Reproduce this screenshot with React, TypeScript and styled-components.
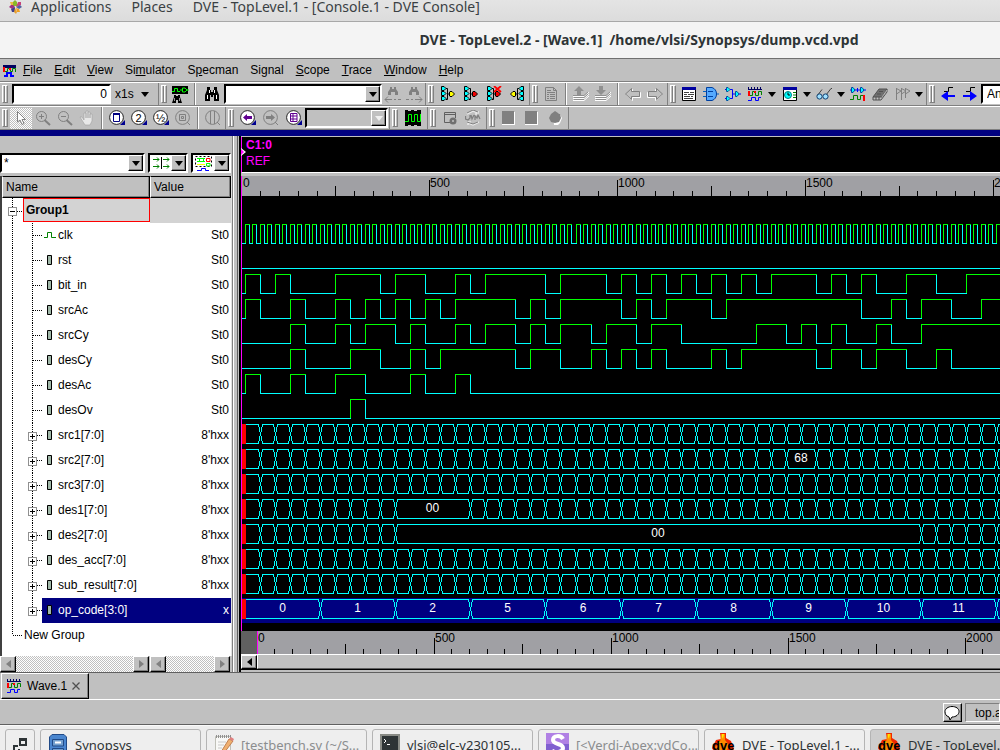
import React from "react";
import styled, { createGlobalStyle, css } from "styled-components";

const GREEN = "#00ff00";
const CYAN = "#00ffff";
const FACE = "#c0c0c0";
const NAVY = "#000080";
const UI = `"Liberation Sans", Arial, sans-serif`;
const SHELL = `"Noto Sans", "Open Sans", sans-serif`;

const Global = createGlobalStyle`
  * { box-sizing: border-box; }
  html, body { margin: 0; overflow: hidden; }
  body { background: ${FACE}; font: 12px/16px ${UI}; color: #000; }
  button, input, select { font: inherit; color: inherit; margin: 0; padding: 0; border-radius: 0; }
  svg { display: block; flex: none; }
`;

const raised = css`
  border: 1px solid;
  border-color: #fff #000 #000 #fff;
  box-shadow: inset -1px -1px 0 #808080;
`;
const sunken = css`
  border: 2px solid;
  border-color: #000 #fff #fff #000;
`;

const Screen = styled.div`
  display: flex;
  flex-direction: column;
  width: 100%;
`;

/* ---------- desktop shell ---------- */
const TopPanel = styled.header`
  display: flex;
  gap: 20px;
  height: 22px;
  padding: 0 8px;
  background: linear-gradient(#e4e4e4, #dcdcdc);
  border-bottom: 1px solid #a8a8a8;
  font: 14px/14px ${SHELL};
  color: #3a4043;
  white-space: nowrap;
`;
const PanelLink = styled.button`
  display: flex;
  gap: 8px;
  height: 14px;
  border: 0;
  background: none;
`;
const TitleBar = styled.h1`
  height: 36px;
  margin: 0;
  padding-left: 278px;
  background: #f4f4f4;
  font: bold 14px/36px ${SHELL};
  color: #2e3436;
  text-align: center;
  white-space: pre;
`;
const TaskBar = styled.footer`
  display: flex;
  gap: 5px;
  height: 36px;
  padding: 3px 5px;
  background: #ededed;
  border-top: 1px solid #fafafa;
`;
const Task = styled.button<{ $active?: boolean; $dim?: boolean; $icon?: boolean }>`
  display: flex;
  align-items: center;
  gap: 7px;
  flex: none;
  width: ${(p) => (p.$icon ? 30 : 161)}px;
  height: 31px;
  padding: 0 ${(p) => (p.$icon ? 4 : 7)}px;
  border: 1px solid #b4b4b4;
  border-radius: 3px;
  background: ${(p) => (p.$active ? "#cdcdcd" : "#eeeeee")};
  font: 13px/18px ${SHELL};
  color: ${(p) => (p.$dim ? "#8b8d8e" : "#2e3436")};
  white-space: nowrap;
  overflow: hidden;
`;

/* ---------- menus and toolbars ---------- */
const MenuBar = styled.nav`
  display: flex;
  align-items: center;
  gap: 2px;
  height: 24px;
  padding-left: 3px;
  border-top: 1px solid #707070;
  border-bottom: 1px solid #808080;
`;
const MenuItem = styled.button`
  height: 20px;
  padding: 0 5px;
  border: 0;
  background: none;
`;
const Tools = styled.div`
  display: flex;
  height: 24px;
  overflow: hidden;
  border-top: 1px solid #fff;
  border-bottom: 1px solid #808080;
`;
const Group = styled.div<{ $open?: boolean }>`
  display: flex;
  align-items: center;
  flex: none;
  padding: 0 1px 0 2px;
  border-right: ${(p) => (p.$open ? 0 : 1)}px solid #808080;
`;
const Grip = styled.span`
  width: 6px;
  height: 18px;
  margin-right: 2px;
  border: 1px solid;
  border-color: #fff #808080 #808080 #fff;
  background: linear-gradient(90deg, ${FACE} 0 1px, #808080 1px 2px, #fff 2px 3px, ${FACE} 3px);
`;
const Tool = styled.button<{ $w?: number; $on?: boolean }>`
  display: flex;
  align-items: center;
  justify-content: center;
  flex: none;
  width: ${(p) => p.$w || 22}px;
  height: 21px;
  border: 0;
  background: ${(p) =>
    p.$on ? "repeating-conic-gradient(#fff 0 25%, #c0c0c0 0 50%) 0 0 / 2px 2px" : "none"};
`;
const Sep = styled.span`
  width: 2px;
  height: 22px;
  margin: 0 3px;
  border-left: 1px solid #808080;
  border-right: 1px solid #fff;
`;
const TimeInput = styled.input`
  width: 99px;
  height: 20px;
  margin-left: 2px;
  padding-right: 2px;
  text-align: right;
  background: #fff;
  ${sunken}
`;
const UnitButton = styled.button`
  display: flex;
  align-items: center;
  gap: 7px;
  width: 46px;
  padding: 0 4px;
  border: 0;
  background: none;
`;
const Combo = styled.div<{ $w: number; $off?: boolean }>`
  display: flex;
  flex: none;
  width: ${(p) => p.$w}px;
  height: 20px;
  background: ${(p) => (p.$off ? FACE : "#fff")};
  ${sunken}
`;
const ComboInput = styled.input`
  flex: 1;
  min-width: 0;
  padding-left: 2px;
  border: 0;
  background: transparent;
`;
const ComboIcon = styled.span`
  display: flex;
  flex: 1;
  align-items: center;
  justify-content: center;
`;
const ComboButton = styled.button`
  display: flex;
  align-items: center;
  justify-content: center;
  width: 15px;
  height: 16px;
  background: ${FACE};
  ${raised}
`;
const EdgeSelect = styled.select`
  appearance: none;
  width: 120px;
  height: 20px;
  padding-left: 4px;
  background: #fff;
  ${sunken}
`;
const NavyRule = styled.div`
  height: 6px;
  background: ${NAVY};
`;

/* ---------- workspace ---------- */
const Workspace = styled.main`
  display: flex;
  height: 536px;
`;
const SignalPane = styled.section`
  display: flex;
  flex-direction: column;
  flex: none;
  width: 232px;
  padding-top: 17px;
`;
const Filters = styled.div`
  display: flex;
  gap: 3px;
  height: 23px;
`;
const Tree = styled.div`
  flex: 1;
  background: #fff;
  border-left: 2px solid #404040;
  border-right: 1px solid #e0e0e0;
`;
const SignalTable = styled.table`
  width: 100%;
  border-collapse: separate;
  border-spacing: 0;
  table-layout: fixed;
`;
const Head = styled.th<{ $w?: number }>`
  width: ${(p) => (p.$w ? `${p.$w}px` : "auto")};
  height: 22px;
  padding: 0 3px;
  text-align: left;
  font-weight: normal;
  background: ${FACE};
  ${raised}
  border-top-color: #000;
`;
const Cell = styled.td<{ $tint?: string }>`
  height: 25px;
  padding: 0;
  background: ${(p) => p.$tint || "transparent"};
`;
const NameLine = styled.div`
  display: flex;
  height: 25px;
`;
const GroupName = styled.div`
  flex: 1;
  height: 24px;
  padding-left: 2px;
  border: 1px solid #f00;
  background: #d3d3d3;
  font-weight: bold;
  line-height: 22px;
`;
const SignalName = styled.div<{ $sel?: boolean }>`
  display: flex;
  flex: 1;
  gap: 2px;
  line-height: 24px;
  background: ${(p) => (p.$sel ? NAVY : "transparent")};
  color: ${(p) => (p.$sel ? "#fff" : "#000")};
`;
const PlainName = styled.div`
  padding-left: 1px;
  line-height: 24px;
`;
const ValueText = styled.div<{ $sel?: boolean }>`
  height: 25px;
  padding-right: 2px;
  line-height: 24px;
  text-align: right;
  background: ${(p) => (p.$sel ? NAVY : "transparent")};
  color: ${(p) => (p.$sel ? "#fff" : "#000")};
`;
const Scrolls = styled.div`
  display: flex;
  gap: 1px;
  height: 16px;
  padding-right: 2px;
`;
const ScrollBar = styled.div<{ $w?: number }>`
  display: flex;
  width: ${(p) => (p.$w ? `${p.$w}px` : "auto")};
  flex: ${(p) => (p.$w ? "none" : 1)};
`;
const ScrollButton = styled.button`
  display: flex;
  align-items: center;
  justify-content: center;
  flex: none;
  width: 16px;
  background: ${FACE};
  ${raised}
`;
const DitherTrack = styled.div`
  flex: 1;
  background: repeating-conic-gradient(#fff 0 25%, #c0c0c0 0 50%) 0 0 / 2px 2px;
`;
const Splitter = styled.div`
  flex: none;
  width: 9px;
  background: linear-gradient(90deg, #808080 0 1px, #fff 1px 2px, ${FACE} 2px 5px, #606060 5px 6px, ${FACE} 6px 7px, #000 7px 9px);
`;
const WavePane = styled.section`
  display: flex;
  flex: 1;
  flex-direction: column;
  min-width: 0;
  overflow: hidden;
  padding-top: 1px;
`;
const CursorStrip = styled.div`
  display: flex;
  flex-direction: column;
  height: 36px;
  padding-left: 4px;
  border-left: 1px solid #f0f;
  border-bottom: 1px solid #fff;
  background: #000;
  color: #f0f;
  position: relative;
`;
const CursorKnob = styled.svg`
  position: absolute;
  left: -1px;
  top: 11px;
`;
const CursorName = styled.strong`
  line-height: 16px;
`;
const Ruler = styled.div<{ $bottom?: boolean }>`
  display: flex;
  height: ${(p) => (p.$bottom ? 23 : 20)}px;
  margin-top: ${(p) => (p.$bottom ? 0 : 3)}px;
  border-left: ${(p) => (p.$bottom ? "16px solid #606060" : "1px solid #f0f")};
  background: #a0a0a4;
`;
const RulerEdge = styled.span`
  width: 1px;
  margin-right: -1px;
  background: #f0f;
`;
const Plot = styled.div`
  display: flex;
  flex-direction: column;
  padding: 27px 0 8px;
  border-left: 1px solid #f0f;
  background: #000;
`;
const WaveRow = styled.svg<{ $sel?: boolean }>`
  width: 100%;
  height: 25px;
  background: ${(p) => (p.$sel ? NAVY : "transparent")};
  font: 12px ${UI};
`;
const RulerSvg = styled.svg`
  flex: 1;
  min-width: 0;
  height: 100%;
  font: 12px ${UI};
`;
const WaveScroll = styled.div`
  display: flex;
  height: 16px;
  border-top: 1px solid #fff;
  border-bottom: 1px solid #000;
`;
const Thumb = styled.div`
  flex: 1;
  background: ${FACE};
  border-left: 1px solid #fff;
  border-bottom: 1px solid #606060;
`;

/* ---------- tabs and status ---------- */
const TabStrip = styled.div`
  display: flex;
  height: 28px;
  border-top: 1px solid #606060;
  border-bottom: 1px solid #fff;
`;
const Tab = styled.div`
  display: flex;
  align-items: center;
  gap: 5px;
  width: 88px;
  height: 26px;
  margin-left: 1px;
  padding-left: 4px;
  ${raised}
`;
const TabClose = styled.button`
  display: flex;
  border: 0;
  background: none;
`;
const StatusBar = styled.div`
  display: flex;
  justify-content: flex-end;
  gap: 3px;
  height: 25px;
  padding-top: 3px;
  border-bottom: 1px solid #606060;
`;
const Bubble = styled.button`
  width: 19px;
  height: 19px;
  background: ${FACE};
  ${raised}
`;
const Scope = styled.output`
  width: 35px;
  height: 19px;
  padding-left: 9px;
  border: 1px solid;
  border-color: #808080 #fff #fff #808080;
  line-height: 18px;
  overflow: hidden;
  white-space: nowrap;
`;

/* ---------- icons ---------- */
const Ic = ({ children, w = 16, h = 16 }: { children: React.ReactNode; w?: number; h?: number }) => (
  <svg width={w} height={h} viewBox={`0 0 ${w} ${h}`} fill="none" aria-hidden="true">
    {children}
  </svg>
);
const Caret = ({ c = "#000" }: { c?: string }) => (
  <Ic w={8} h={5}>
    <path d="M0 0H8L4 5Z" fill={c} />
  </Ic>
);
const Arrow = ({ flip, c = "#808080" }: { flip?: boolean; c?: string }) => (
  <Ic w={5} h={8}>
    <path d={flip ? "M0 0V8L5 4Z" : "M5 0V8L0 4Z"} fill={c} />
  </Ic>
);
const WaveIcon = () => (
  <Ic>
    <path d="M1.5 1V3M4.500 1V3M7.500 1V3M10.500 1V3M13.500 1V3M1 3.500H15" stroke="#000060" />
    <path d="M3 9.500H5.500V5.500H8.500V9.500H11.500V5.500H14.500V9" stroke="#008000" />
    <path d="M1 5H3V10H1ZM7 5H9V7H7Z" fill="#f00" />
    <path d="M1 14.500H4.500V11.500H8.500V14.500H11.500V11.500H14" stroke="#00f" />
  </Ic>
);
const Binoc = () => (
  <Ic>
    <path d="M3 1H6V4H7V6H9V4H10V1H13V4L15 9V15H10V9H9V11H7V9H6V15H1V9L3 4Z" fill="#000" />
    <path d="M3.500 9V13M5.500 4V7M12.500 9V13M10.500 4V7" stroke="#fff" />
  </Ic>
);
const FindWave = () => (
  <Ic w={18} h={17}>
    <path d="M1 0H17V8H1Z" fill="#000" />
    <path d="M1 5.500H3.500V2.500H6.500V5.500H9M9 4H11M11.500 2V6H14L16 4L14 2H11.500M16 4H18" stroke={GREEN} />
    <path d="M3 9H5V10H7V9H9V11L11 17H7V14H5V17H1L3 11Z" fill="#000" />
    <path d="M3.500 12V15M8.500 12V15" stroke="#fff" strokeWidth=".6" />
  </Ic>
);
const FindDir = ({ flip }: { flip?: boolean }) => (
  <Ic w={18} h={17}>
    <path d="M6 1H8V3H10V1H12V3L14 6V9H11V6H7V9H4V6L6 3Z" fill="#808080" />
    <path d={flip ? "M1 13.500H4M6 13.500H8M10 13.500H17M14 10.500L17 13.500L14 16.500" : "M17 13.500H14M12 13.500H10M8 13.500H1M4 10.500L1 13.500L4 16.500"} stroke="#808080" />
  </Ic>
);
const Fan = ({ c, flip, x }: { c: string; flip?: boolean; x?: boolean }) => (
  <Ic>
    <g transform={flip ? "matrix(-1 0 0 1 16 0)" : undefined}>
      <path d="M6 2.500H7.500V13.500H6M7.500 8H10" stroke="#000" />
      <path d="M1.500 .5H4L6 2.500L4 4.500H1.500ZM1.500 5.500H4L6 7.500L4 9.500H1.500ZM1.500 10.500H4L6 12.500L4 14.500H1.500Z" fill={CYAN} stroke="#000" />
      <path d="M10 5.500H12L14.500 8L12 10.500H10L9.500 10V6Z" fill={c} stroke="#000" />
    </g>
    {x && <path d="M8 0L15 6M15 0L8 6" stroke="#f00" strokeWidth="1.800" />}
  </Ic>
);
const DocIcon = () => (
  <Ic>
    <path d="M2.500 1.500H10.500L13.500 4.500V14.500H2.500ZM10.500 1.500V4.500H13.500M4 4.500H8M4 6.500H12M4 8.500H6M7 8.500H12M4 10.500H6M7 10.500H12M4 12.500H6M7 12.500H12" stroke="#808080" />
  </Ic>
);
const Stack = ({ down }: { down?: boolean }) => (
  <Ic w={18}>
    <path d="M1 10.500H12L17 6M1 12.500H12L17 8M1 14.500H12L17 10" stroke="#fff" />
    <path d="M1 9.500H12L16 6M2 11.500H12L16 8M2 13.500H12" stroke="#909090" />
    <path d={down ? "M5 0H9V4H12L7 9L2 4H5Z" : "M7 0L12 5H9V9H5V5H2Z"} fill="#909090" />
  </Ic>
);
const Outline = ({ flip }: { flip?: boolean }) => (
  <Ic>
    <g transform={flip ? "matrix(-1 0 0 1 16 0)" : undefined}>
      <path d="M1.500 9L7.500 3.500V6.500H15.500V11.500H7.500V14.500Z" stroke="#fff" />
      <path d="M.5 8L6.500 2.500V5.500H14.500V10.500H6.500V13.500Z" stroke="#808080" fill={FACE} />
    </g>
  </Ic>
);
const ListIcon = () => (
  <Ic>
    <path d="M1.500 1.500H14.500V14.500H1.500Z" fill="#fff" stroke="#000" />
    <path d="M1 1H15V4H1Z" fill="#0000a0" />
    <path d="M3 6.500H8M9 6.500H13M3 8.500H6M7 8.500H13M3 10.500H9M10 10.500H12M3 12.500H12" stroke="#404040" />
  </Ic>
);
const GateIcon = () => (
  <Ic>
    <path d="M0 5.500H3M0 10.500H3M13 8H16" stroke="#0060c0" />
    <path d="M3.500 1.500H9C12 2.500 13.500 5 13.500 8S12 13.500 9 14.500H3.500Z" fill="#55aaff" stroke="#0040a0" />
    <path d="M5 5.500H10M5 10.500H10" stroke="#0040a0" />
  </Ic>
);
const NetIcon = () => (
  <Ic>
    <path d="M0 3.500H2M0 12.500H2M5 3.500H7.500V12.500H5M7.500 8H10M14 8H16" stroke="#00f" />
    <path d="M1.500 1.500H3L5 3.500L3 5.500H1.500ZM1.500 10.500H3L5 12.500L3 14.500H1.500ZM10.500 5.500H12L14 8L12 10.500H10.500Z" fill={CYAN} stroke="#0050a0" />
  </Ic>
);
const ClockList = () => (
  <Ic>
    <path d="M1.500 1.500H14.500V14.500H1.500Z" fill="#fff" stroke="#000" />
    <path d="M1 1H15V4H1Z" fill="#0000a0" />
    <circle cx="6" cy="9" r="3.500" fill={CYAN} stroke="#008080" />
    <path d="M6 6.500V9H8" stroke="#000" />
    <path d="M11 6.500H14M11 9H14M11 11.500H14" stroke="#008000" />
  </Ic>
);
const Glasses = () => (
  <Ic>
    <path d="M1 10L6 3.500M10 9L15 2.500H16" stroke="#404040" />
    <circle cx="3.500" cy="10.500" r="2.600" fill="#a0e0ff" stroke="#104070" />
    <circle cx="9.500" cy="10.500" r="2.600" fill="#a0e0ff" stroke="#104070" />
  </Ic>
);
const NetWave = () => (
  <Ic>
    <path d="M0 4H16" stroke="#00f" />
    <path d="M1.500 1.500H3L5 4L3 6.500H1.500ZM10.500 1.500H12L14 4L12 6.500H10.500Z" fill={CYAN} stroke="#0040a0" />
    <path d="M7.500 2V6" stroke="#00f" />
    <path d="M0 13.500H3.500V9.500H7.500V13.500H10.500V9.500H13" stroke="#008000" />
    <path d="M13 9H15V15H13Z" fill="#f00" />
  </Ic>
);
const Memory = () => (
  <Ic>
    <path d="M1 11L7 3H15L10 11Z" fill="#707070" stroke="#505050" />
    <path d="M1 11V14H9L15 6V3M4 11V14M7 11V14M5 8L9 8M7 5.500H11" stroke="#505050" />
    <path d="M10 11L15 4" stroke="#b0b0b0" />
  </Ic>
);
const Flags = () => (
  <Ic>
    <path d="M2.500 2V14M2.500 2.500L7 5L2.500 8M7.500 2V14M7.500 2.500L12 5L7.500 8M11.500 2V12M11.500 2.500L16 5L11.500 8" stroke="#808080" />
  </Ic>
);
const EdgeArrow = ({ flip }: { flip?: boolean }) => (
  <Ic>
    <path d="M4 5.500H8.500V1.500H13" stroke="#000" />
    <path d={flip ? "M1 9H8V5L15 10L8 15V11H1Z" : "M15 9H8V5L1 10L8 15V11H15Z"} fill="#00f" />
  </Ic>
);
const Pointer = () => (
  <Ic>
    <path d="M4.500 1.500V12L7 10L9 14.500L11 13.500L9 9.500H12.500Z" fill="#fff" stroke="#808080" />
  </Ic>
);
const Lens = ({ plus }: { plus?: boolean }) => (
  <Ic>
    <path d="M9.500 10L15 15" stroke="#808080" strokeWidth="2" />
    <circle cx="6.500" cy="6.500" r="5" stroke="#808080" />
    <path d={plus ? "M4 6.500H9M6.500 4V9" : "M4 6.500H9"} stroke="#808080" />
  </Ic>
);
const Hand = () => (
  <Ic>
    <path d="M1 7H3L5 10V3H7V8V1H9V8V2H11V8V4H13V11L11 15H6Z" fill="#e8e8e8" stroke="#a0a0a0" strokeWidth=".6" />
  </Ic>
);
const Round = ({ off, children }: { off?: boolean; children?: React.ReactNode }) => (
  <Ic>
    {!off && <path d="M11 15H16V10Z" fill="#000090" />}
    <circle cx="7.500" cy="7.500" r="6.900" fill={off ? FACE : "#fff"} stroke={off ? "#808080" : "#202020"} />
    {off && <path d="M12 12L15 15" stroke="#808080" />}
    {children}
  </Ic>
);
const Digit = ({ children }: { children: string }) => (
  <text x="7.500" y="11.500" fontSize="11" fontFamily="Liberation Sans, sans-serif" textAnchor="middle" fill="#000">
    {children}
  </text>
);
const FilterArrows = () => (
  <Ic w={18} h={14}>
    <path d="M9.500 1V13" stroke="#000" />
    <path d="M1 3.500H7M1 10.500H7M5 1.500L7 3.500L5 5.500M5 8.500L7 10.500L5 12.500M11 3.500H17M11 10.500H17M15 1.500L17 3.500L15 5.500M15 8.500L17 10.500L15 12.500" stroke="#008000" />
  </Ic>
);
const FilterWave = () => (
  <Ic w={17} h={16}>
    <path d="M.5 1.500H16.500V11.500H.5Z" stroke="#000" strokeDasharray="2 2" />
    <path d="M2 3.500H10M2 6.500H10M4.500 3V7M8.500 3V7" stroke={GREEN} />
    <path d="M11.500 3.500H15V6.500H11.500Z" stroke="#f00" />
    <path d="M2 9.500H10" stroke="#ff0" />
    <path d="M11.500 8.500H15V11H11.500Z" stroke={GREEN} />
    <path d="M2 15.500H6.500V13.500H10.500V15.500H14" stroke="#00f" />
  </Ic>
);
const ClkIcon = () => (
  <Ic w={14} h={25}>
    <path d="M2 14.500H5.500V9.500H9.500V14.500H14" stroke="#008000" />
  </Ic>
);
const RegIcon = () => (
  <Ic w={14} h={25}>
    <path d="M5.500 7.500H9.500V16.500H5.500Z" fill="#a0b8a8" stroke="#000" />
  </Ic>
);
const AppLogo = () => (
  <Ic w={15} h={14}>
    <path d="M7 0L9 2V6H5V2Z" fill="#8ab828" />
    <path d="M10 2H13V5L8 7Z" fill="#c7417b" />
    <path d="M1 7L4 4L7 7L4 9Z" fill="#a03080" />
    <path d="M8 7L12 5L14 7L11 9Z" fill="#5060a0" />
    <path d="M3 9L7 7V12L4 12Z" fill="#40408c" />
    <path d="M8 8L11 9L12 12H9Z" fill="#f0a020" />
    <path d="M6 12L7 8L9 12L8 14Z" fill="#e8a030" />
    <path d="M2 2L5 2V5L3 5Z" fill="#e8b840" />
  </Ic>
);
const DveLogo = () => (
  <Ic w={23} h={26}>
    <path d="M8 1H14V6L19 9L22 17L18 25H5L0 16L4 8L9 7Z" fill="#f02800" />
    <path d="M9 2H13V8L17 13L14 22L6 21L3 15L8 11Z" fill="#ff8a00" />
    <path d="M10 2H12L11 7L10 5ZM6 9L9 10L6 12Z" fill="#ffe600" />
    <text x="0" y="18" fontSize="13" fontWeight="bold" fontFamily="Liberation Sans, sans-serif" fill="#000">
      dve
    </text>
  </Ic>
);

/* ---------- signal data ---------- */
type Sig = { name: string; value: string; edges?: number[]; hold?: [number, number, string] };
const SIGNALS: Sig[] = [
  { name: "clk", value: "St0" },
  { name: "rst", value: "St0", edges: [] },
  { name: "bit_in", value: "St0", edges: [0, 1, 2, 3, 6, 9, 10, 12, 14, 15, 16, 20, 21, 24, 25, 26, 27, 28, 29, 30, 31, 32, 33, 34, 35, 38, 39, 40, 41, 42, 44, 46, 48] },
  { name: "srcAc", value: "St0", edges: [0, 1, 3, 4, 6, 7, 8, 9, 10, 11, 12, 13, 14, 18, 19, 20, 21, 25, 26, 27, 28, 31, 32, 41, 43, 44, 45, 47, 49] },
  { name: "srcCy", value: "St0", edges: [3, 4, 6, 7, 8, 10, 11, 12, 14, 15, 16, 18, 19, 20, 21, 23, 24, 26, 27, 29, 34, 36, 37, 38, 39, 40, 42, 43, 45] },
  { name: "desCy", value: "St0", edges: [3, 4, 7, 9, 11, 12, 13, 18, 19, 21, 23, 24, 25, 26, 27, 28, 31, 32, 33, 38, 39, 41, 42, 44, 46, 47] },
  { name: "desAc", value: "St0", edges: [0, 1, 3, 4, 6, 8, 11, 12, 14, 15] },
  { name: "desOv", value: "St0", edges: [7, 8] },
  { name: "src1[7:0]", value: "8'hxx" },
  { name: "src2[7:0]", value: "8'hxx", hold: [36, 38, "68"] },
  { name: "src3[7:0]", value: "8'hxx" },
  { name: "des1[7:0]", value: "8'hxx", hold: [10, 15, "00"] },
  { name: "des2[7:0]", value: "8'hxx", hold: [10, 45, "00"] },
  { name: "des_acc[7:0]", value: "8'hxx" },
  { name: "sub_result[7:0]", value: "8'hxx" },
  { name: "op_code[3:0]", value: "x" },
];
const OPCODES = ["0", "1", "2", "5", "6", "7", "8", "9", "10", "11"];
const CYCLES = 130;
const WIDE = 4000;
const HI = 1.5;
const LO = 20.5;
const at = (k: number) => Math.round(3 + 15.023 * k);

function Digital({ edges }: { edges: number[] }) {
  let high = "";
  let low = `M0 ${LO}`;
  edges.forEach((x, i) => {
    const px = x + 0.5;
    const next = (i + 1 < edges.length ? edges[i + 1] : WIDE) + 0.5;
    if (i % 2 === 0) {
      low += `H${px}`;
      high += `M${px} ${LO}V${HI}H${next}`;
    } else {
      low += `M${px} ${HI}V${LO}`;
    }
  });
  if (edges.length % 2 === 0) low += `H${WIDE}`;
  return (
    <g fill="none" shapeRendering="crispEdges">
      <path d={high} stroke={GREEN} />
      <path d={low} stroke={CYAN} />
    </g>
  );
}

function Bus({ cuts, labels }: { cuts: number[]; labels: Record<number, string> }) {
  let d = "";
  for (let i = 0; i + 1 < cuts.length; i++) {
    const a = cuts[i] + 0.5;
    const b = cuts[i + 1] + 0.5;
    const start = i === 0 ? `M${a} ${HI}` : `M${a} 11L${a + 2} ${HI}`;
    const end = i === 0 ? `H${a}` : `H${a + 2}L${a} 11`;
    d += `${start}H${b - 2}L${b} 11L${b - 2} ${LO}${end}`;
  }
  return (
    <>
      <path d={d} fill="none" stroke={CYAN} shapeRendering="crispEdges" />
      <rect x="0" y="1" width="4" height="20" fill="#f00" />
      {Object.keys(labels).map((k) => {
        const i = Number(k);
        return (
          <text key={k} x={(cuts[i] + cuts[i + 1]) / 2} y="14" fill="#fff" textAnchor="middle">
            {labels[i]}
          </text>
        );
      })}
    </>
  );
}

function Wave({ sig }: { sig: Sig }) {
  if (sig.name === "clk") {
    const edges: number[] = [];
    for (let k = 0; k < CYCLES; k++) edges.push(at(k), at(k) + 4, at(k) + 7, at(k) + 11);
    return <Digital edges={edges} />;
  }
  if (sig.edges) return <Digital edges={sig.edges.map(at)} />;
  const cuts: number[] = [];
  const labels: Record<number, string> = {};
  if (sig.name.startsWith("op_code")) {
    for (let k = 0; k < CYCLES; k += 5) {
      if (OPCODES[k / 5]) labels[k / 5] = OPCODES[k / 5];
      cuts.push(at(k));
    }
  } else {
    for (let k = 0; k < CYCLES; k++) {
      if (sig.hold && k > sig.hold[0] && k < sig.hold[1]) continue;
      if (sig.hold && k === sig.hold[0]) labels[cuts.length] = sig.hold[2];
      cuts.push(at(k));
    }
  }
  return <Bus cuts={cuts} labels={labels} />;
}

const MARKS = Array.from({ length: 90 }, (_, i) => i * 50);
const LABELS = [0, 500, 1000, 1500, 2000];

function Ticks({ scale, height }: { scale: number; height: number }) {
  const d = MARKS.filter((t) => t > 0)
    .map((t) => {
      const len = t % 500 === 0 ? 16 : t % 250 === 0 ? 10 : 5;
      return `M${Math.floor(t * scale) + 0.5} ${height}V${height - len}`;
    })
    .join("");
  return (
    <RulerSvg>
      <path d={d} stroke="#000" shapeRendering="crispEdges" />
      {LABELS.map((t) => (
        <text key={t} x={Math.floor(t * scale) + 1} y="11">
          {t}
        </text>
      ))}
    </RulerSvg>
  );
}

type GuideKind = "group" | "leaf" | "bus" | "last" | "end";
const Guide = ({ kind }: { kind: GuideKind }) => {
  const w = kind === "group" || kind === "end" ? 21 : 40;
  return (
    <Ic w={w} h={25}>
      <g stroke="#000" strokeDasharray="1 1" shapeRendering="crispEdges">
        <path d={kind === "end" ? "M10.5 0V12" : "M10.5 0V25"} />
        {kind === "group" && <path d="M15 13.500H21" />}
        {kind === "end" && <path d="M11 12.500H20" />}
        {w === 40 && <path d={kind === "last" ? "M30.5 0V12" : "M30.5 0V25"} />}
        {w === 40 && <path d="M31 12.500H40" />}
      </g>
      {(kind === "group" || kind === "bus" || kind === "last") && (
        <g transform={kind === "group" ? "translate(6 9)" : "translate(26 9)"} shapeRendering="crispEdges">
          <path d="M.5 .5H8.500V8.500H.5Z" fill="#fff" stroke="#909090" />
          <path d={kind === "group" ? "M2 4.500H7" : "M2 4.500H7M4.500 2V7"} stroke="#000" />
        </g>
      )}
    </Ic>
  );
};

const MENUS: [string, string, string][] = [
  ["", "F", "ile"], ["", "E", "dit"], ["", "V", "iew"], ["Si", "m", "ulator"], ["S", "p", "ecman"],
  ["Si", "g", "nal"], ["", "S", "cope"], ["", "T", "race"], ["", "W", "indow"], ["", "H", "elp"],
];

export default function App() {
  return (
    <Screen>
      <Global />
      <TopPanel>
        <PanelLink><AppLogo />Applications</PanelLink>
        <PanelLink>Places</PanelLink>
        <PanelLink>DVE - TopLevel.1 - [Console.1 - DVE Console]</PanelLink>
      </TopPanel>
      <TitleBar>DVE - TopLevel.2 - [Wave.1]  /home/vlsi/Synopsys/dump.vcd.vpd</TitleBar>
      <MenuBar>
        <svg width="13" height="13" viewBox="0 0 13 13" fill="none" aria-hidden="true">
          <path d="M0 1H13V4H0Z" fill="#000060" />
          <path d="M2 7.500H4.500V4.500H7.500V7.500H9.500V4.500H12.500V8" stroke="#008000" />
          <path d="M0 3H2V8H0ZM6 4H8V6H6Z" fill="#f00" />
          <path d="M1 12H4V9H8V12H11" stroke="#00f" strokeWidth="2" />
        </svg>
        {MENUS.map(([a, u, b]) => (
          <MenuItem key={a + u + b}>{a}<u>{u}</u>{b}</MenuItem>
        ))}
      </MenuBar>

      <Tools>
        <Group>
          <Grip />
          <TimeInput aria-label="Time" defaultValue="0" />
          <UnitButton>x1s <Caret /></UnitButton>
        </Group>
        <Group>
          <Grip />
          <Tool aria-label="Find signal"><FindWave /></Tool>
          <Sep />
          <Tool aria-label="Find" $w={25}><Binoc /></Tool>
          <Combo $w={158}>
            <ComboInput aria-label="Search text" />
            <ComboButton aria-label="Search history"><Caret /></ComboButton>
          </Combo>
          <Tool aria-label="Find previous"><FindDir /></Tool>
          <Tool $w={20} aria-label="Find next"><FindDir flip /></Tool>
        </Group>
        <Group>
          <Grip />
          <Tool $w={23} aria-label="Trace drivers"><Fan c="#ffff00" /></Tool>
          <Tool $w={23} aria-label="Trace active driver"><Fan c="#f00000" /></Tool>
          <Tool $w={23} aria-label="Clear drivers"><Fan c="#f00000" x /></Tool>
          <Tool $w={23} aria-label="Trace loads"><Fan c="#ffff00" flip /></Tool>
        </Group>
        <Group>
          <Grip />
          <Tool aria-label="Source"><DocIcon /></Tool>
          <Sep />
          <Tool aria-label="Scope up"><Stack /></Tool>
          <Tool aria-label="Scope down"><Stack down /></Tool>
          <Sep />
          <Tool aria-label="Back"><Outline /></Tool>
          <Tool aria-label="Forward"><Outline flip /></Tool>
        </Group>
        <Group>
          <Grip />
          <Tool aria-label="List"><ListIcon /></Tool>
          <Tool aria-label="Schematic"><GateIcon /></Tool>
          <Tool aria-label="Path"><NetIcon /></Tool>
          <Tool aria-label="Wave"><WaveIcon /></Tool>
          <Tool $w={12} aria-label="Wave menu"><Caret /></Tool>
          <Tool $w={23} aria-label="Transactions"><ClockList /></Tool>
          <Tool $w={12} aria-label="Transactions menu"><Caret /></Tool>
          <Tool aria-label="Watch"><Glasses /></Tool>
          <Tool $w={12} aria-label="Watch menu"><Caret /></Tool>
          <Tool aria-label="Compare"><NetWave /></Tool>
          <Tool aria-label="Memory"><Memory /></Tool>
          <Tool aria-label="Assertions"><Flags /></Tool>
          <Tool $w={12} aria-label="Assertions menu"><Caret /></Tool>
        </Group>
        <Group $open>
          <Grip />
          <Tool aria-label="Previous edge"><EdgeArrow /></Tool>
          <Tool aria-label="Next edge"><EdgeArrow flip /></Tool>
          <EdgeSelect aria-label="Edge kind" defaultValue="Any Edge"><option>Any Edge</option></EdgeSelect>
        </Group>
      </Tools>

      <Tools>
        <Group>
          <Grip />
          <Tool $on aria-label="Select"><Pointer /></Tool>
          <Tool aria-label="Zoom in"><Lens plus /></Tool>
          <Tool aria-label="Zoom out"><Lens /></Tool>
          <Tool aria-label="Pan"><Hand /></Tool>
          <Sep />
          <Tool aria-label="Zoom full"><Round><path d="M4.500 4.500H10.500V11.500H4.500Z" stroke="#000080" /><path d="M4 3H11V5H4Z" fill="#000080" /></Round></Tool>
          <Tool aria-label="Zoom 2x"><Round><Digit>2</Digit></Round></Tool>
          <Tool aria-label="Zoom half"><Round><Digit>½</Digit></Round></Tool>
          <Tool aria-label="Zoom selection"><Round off><path d="M4.500 4.500H10.500V10.500H4.500ZM6.500 6.500H8.500V8.500H6.500Z" stroke="#808080" /></Round></Tool>
          <Sep />
          <Tool aria-label="Zoom cursors"><Round off><path d="M5.500 1V14M9.500 1V14" stroke="#808080" /></Round></Tool>
        </Group>
        <Group>
          <Grip />
          <Tool $w={23} aria-label="Undo zoom"><Round><path d="M3 7.500L7 4V6H12V9H7V11Z" fill="#600090" /></Round></Tool>
          <Tool $w={23} aria-label="Redo zoom"><Round off><path d="M12 7.500L8 4V6H3V9H8V11Z" fill="#808080" /></Round></Tool>
          <Tool $w={23} aria-label="Named zooms"><Round><path d="M4.500 3.500H11V11.500H4.500ZM4.500 6H11M4.500 9H11M7 3.500V11.500" stroke="#600090" /></Round></Tool>
          <Combo $w={83} $off>
            <ComboInput aria-label="Zoom name" disabled />
            <ComboButton aria-label="Zoom names" disabled><Caret c="#f0f0f0" /></ComboButton>
          </Combo>
        </Group>
        <Group>
          <Grip />
          <Tool $w={26} aria-label="Wave display">
            <Ic><path d="M0 0H3V1H6V0H9V1H12V0H16V16H12V15H9V16H6V15H3V16H0Z" fill="#000" /><path d="M0 11.500H3.500V4.500H6.500V11.500H9.500V4.500H12.500V11.500H15.500V4" stroke={GREEN} /></Ic>
          </Tool>
        </Group>
        <Group>
          <Grip />
          <Tool $w={23} aria-label="Window setup">
            <Ic><path d="M9 12.500H2.500V2.500H13.500V8M2.500 4.500H13" stroke="#606060" /><circle cx="11" cy="11" r="3.500" fill="#707070" /><circle cx="11" cy="11" r="1" fill="#c0c0c0" /></Ic>
          </Tool>
          <Tool $w={24} aria-label="UVM">
            <Ic><path d="M2 4L8 1L13 3M3 13L8 15L14 12M13 1V4H10M3 15V12H6" stroke="#e8e8e8" strokeWidth="1.500" /><path d="M.5 6V9L3 10L5 8V5M6 5L7 9L9 5M10 10V6L12 8L13 5L15 9" stroke="#808080" strokeWidth="1.300" /><path d="M2 3L8 0L13 2M2 12L8 14L13 12" stroke="#808080" /></Ic>
          </Tool>
        </Group>
        <Group>
          <Grip />
          <Tool aria-label="Stop"><Ic><path d="M2 2H15V15H2Z" fill="#fff" /><path d="M2 1H14V14H2Z" fill="#808080" /></Ic></Tool>
          <Tool $w={24} aria-label="Pause"><Ic><path d="M2 2H15V15H2Z" fill="#fff" /><path d="M2 1H14V14H2Z" fill="#808080" /></Ic></Tool>
          <Tool $w={24} aria-label="Record"><Ic><path d="M6 3L12 3L15 8L13 13L11 15H7Z" fill="#fff" /><path d="M8 1L11 3L13 4L14 8L12 12L8 13L4 12L2 8L4 4Z" fill="#808080" /></Ic></Tool>
        </Group>
      </Tools>
      <NavyRule />

      <Workspace>
        <SignalPane>
          <Filters>
            <Combo $w={145}>
              <ComboInput aria-label="Filter" defaultValue="*" />
              <ComboButton aria-label="Filter history"><Caret /></ComboButton>
            </Combo>
            <Combo $w={40}>
              <ComboIcon><FilterArrows /></ComboIcon>
              <ComboButton aria-label="Direction filter"><Caret /></ComboButton>
            </Combo>
            <Combo $w={40}>
              <ComboIcon><FilterWave /></ComboIcon>
              <ComboButton aria-label="Type filter"><Caret /></ComboButton>
            </Combo>
          </Filters>
          <Tree>
            <SignalTable>
              <thead>
                <tr><Head $w={148}>Name</Head><Head>Value</Head></tr>
              </thead>
              <tbody>
                <tr>
                  <Cell><NameLine><Guide kind="group" /><GroupName>Group1</GroupName></NameLine></Cell>
                  <Cell $tint="#d3d3d3" />
                </tr>
                {SIGNALS.map((s, i) => {
                  const last = i === SIGNALS.length - 1;
                  const kind: GuideKind = last ? "last" : s.name.includes("[") ? "bus" : "leaf";
                  return (
                    <tr key={s.name}>
                      <Cell>
                        <NameLine>
                          <Guide kind={kind} />
                          <SignalName $sel={last}>{i === 0 ? <ClkIcon /> : <RegIcon />}{s.name}</SignalName>
                        </NameLine>
                      </Cell>
                      <Cell><ValueText $sel={last}>{s.value}</ValueText></Cell>
                    </tr>
                  );
                })}
                <tr>
                  <Cell><NameLine><Guide kind="end" /><PlainName>New Group</PlainName></NameLine></Cell>
                  <Cell />
                </tr>
              </tbody>
            </SignalTable>
          </Tree>
          <Scrolls>
            <ScrollBar $w={149}>
              <ScrollButton aria-label="Scroll names left"><Arrow /></ScrollButton>
              <DitherTrack />
              <ScrollButton aria-label="Scroll names right"><Arrow flip /></ScrollButton>
            </ScrollBar>
            <ScrollBar>
              <ScrollButton aria-label="Scroll values left"><Arrow /></ScrollButton>
              <DitherTrack />
              <ScrollButton aria-label="Scroll values right"><Arrow flip /></ScrollButton>
            </ScrollBar>
          </Scrolls>
        </SignalPane>
        <Splitter />
        <WavePane>
          <CursorStrip>
            <CursorKnob width="5" height="8" viewBox="0 0 5 8">
              <path d="M0 0L5 4L0 8Z" fill="#fff" />
              <path d="M0 1L3 4L0 7Z" fill="#f0f" />
            </CursorKnob>
            <CursorName>C1:0</CursorName>
            <span>REF</span>
          </CursorStrip>
          <Ruler><Ticks scale={0.3755} height={20} /></Ruler>
          <Plot>
            {SIGNALS.map((s, i) => (
              <WaveRow key={s.name} $sel={i === SIGNALS.length - 1}><Wave sig={s} /></WaveRow>
            ))}
          </Plot>
          <Ruler $bottom>
            <RulerEdge />
            <Ticks scale={0.354} height={23} />
          </Ruler>
          <WaveScroll>
            <ScrollButton aria-label="Scroll waves left"><Arrow c="#000" /></ScrollButton>
            <Thumb />
          </WaveScroll>
        </WavePane>
      </Workspace>

      <TabStrip>
        <Tab>
          <WaveIcon />
          <span>Wave.1</span>
          <TabClose aria-label="Close tab"><Ic w={8} h={8}><path d="M.5 .5L7.500 7.500M7.500 .5L.5 7.500" stroke="#505050" strokeWidth="1.300" /></Ic></TabClose>
        </Tab>
      </TabStrip>
      <StatusBar>
        <Bubble aria-label="Messages">
          <Ic><path d="M8 1.500C12 1.500 15 3.500 15 6.500S12 12 8 12L6 15L5 12C2 11 1 9 1 6.500S4 1.500 8 1.500Z" fill="#fff" stroke="#000" /></Ic>
        </Bubble>
        <Scope>top.a</Scope>
      </StatusBar>
      <TaskBar>
        <Task $icon aria-label="Show desktop">
          <Ic w={20} h={20}><path d="M10 4H16V10H10ZM8 11H4V17H9V14" stroke="#2e3436" strokeWidth="2" /><path d="M9 3H17V6H9Z" fill="#2e3436" /></Ic>
        </Task>
        <Task>
          <Ic w={20} h={24}><path d="M1.500 4L4 1.500H16L18.500 4V24H1.500Z" fill="#4a86cf" stroke="#204a87" /><path d="M4.500 6.500H15.500V13H4.500ZM4.500 15.500H15.500V22H4.500Z" fill="#729fcf" stroke="#204a87" /><path d="M7 9.500H13M7 18.500H13" stroke="#fff" strokeWidth="2" /></Ic>
          Synopsys
        </Task>
        <Task $dim>
          <Ic w={20} h={24}><path d="M1.500 3.500H16.500V24H1.500Z" fill="#f8f8f6" stroke="#c0c0b8" /><path d="M2 3.500H17" stroke="#909090" strokeWidth="3" strokeDasharray="1 1" /><path d="M4 9H12M4 12H10M4 15H8" stroke="#c8c8c8" /><path d="M7 19L15 6L19 8L10 20L6 22Z" fill="#f0b070" stroke="#c08050" /><path d="M15 6L17 4L20 6L19 8Z" fill="#e08080" /></Ic>
          [testbench.sv (~/S...
        </Task>
        <Task>
          <Ic w={20} h={24}><path d="M1 2H19V24H1Z" fill="#2e3436" stroke="#888a85" strokeWidth="2" /><path d="M4 6L6 8L4 10M7 11.500H10" stroke="#fff" /></Ic>
          vlsi@elc-v230105...
        </Task>
        <Task $dim>
          <Ic w={23} h={26}><path d="M0 1H23V26H0Z" fill="#b080e4" /><path d="M0 12H23V26H0Z" fill="#8060d0" /><path d="M17 7C15 3 7 3 7 8C7 13 17 11 17 16C17 21 8 21 6 18" stroke="#fff" strokeWidth="4" /></Ic>
          [&lt;Verdi-Apex:vdCo...
        </Task>
        <Task><DveLogo />DVE - TopLevel.1 -...</Task>
        <Task $active><DveLogo />DVE - TopLevel.2 -...</Task>
      </TaskBar>
    </Screen>
  );
}
